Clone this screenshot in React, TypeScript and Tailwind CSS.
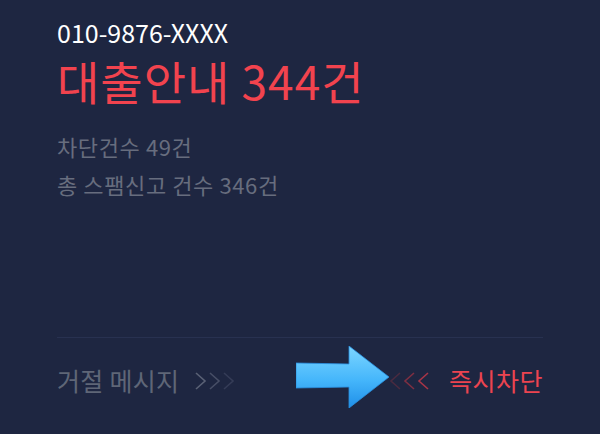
const Chevrons = ({ dir, colors }: { dir: "left" | "right"; colors: string[] }) => (
	<svg width="42" height="18" viewBox="0 0 42 18" fill="none">
		{colors.map((c, i) => {
			const x = i * 14 + 2;
			const d = dir === "right" ? `M${x} 1 L${x + 9} 9 L${x} 17` : `M${x + 9} 1 L${x} 9 L${x + 9} 17`;
			return <path key={i} d={d} stroke={c} strokeWidth="1.6" />;
		})}
	</svg>
);

const BlueArrow = () => (
	<svg width="94" height="62" viewBox="0 0 94 62" className="absolute left-[-93px] top-1/2 -mt-[35px]">
		<defs>
			<linearGradient id="arrowFill" x1="0" y1="0" x2="0" y2="1">
				<stop offset="0" stopColor="#7dd6ff" />
				<stop offset="0.55" stopColor="#45b6fb" />
				<stop offset="1" stopColor="#1f8fe8" />
			</linearGradient>
		</defs>
		<path d="M0 17 L53 18 L53 0 L93 31 L53 62 L53 41 L0 42 Z" fill="url(#arrowFill)" stroke="#2a8fe0" strokeWidth="0.8" />
	</svg>
);

export default function App() {
	return (
		<div className="w-[600px] h-[434px] bg-[#1e2641] flex flex-col px-[57px] font-['Noto_Sans_CJK_KR',sans-serif]">
			<p className="pt-[17px] text-[25px] leading-[30px] text-white">010-9876-XXXX</p>
			<p className="mt-[6px] text-[46px] leading-[54px] tracking-[1px] text-[#f2434e]">대출안내 344건</p>

			<div className="mt-[20px] text-[22px] leading-[38px] tracking-[0.6px] text-[#676d7e]">
				<p>차단건수 49건</p>
				<p>총 스팸신고 건수 346건</p>
			</div>

			<div className="flex-1" />
			<div className="h-px bg-[#283150]" />

			<div className="h-[96px] pb-[10px] flex items-center justify-between">
				<div className="flex items-center gap-[15px]">
					<span className="text-[25px] tracking-[0.3px] text-[#5f6677]">거절 메시지</span>
					<Chevrons dir="right" colors={["#5a6175", "#474e66", "#353c57"]} />
				</div>
				<div className="relative flex items-center gap-[18px]">
					<BlueArrow />
					<Chevrons dir="left" colors={["#4a2b40", "#7e2f42", "#a83547"]} />
					<span className="text-[25px] tracking-[0.5px] text-[#ec4450]">즉시차단</span>
				</div>
			</div>
		</div>
	);
}
